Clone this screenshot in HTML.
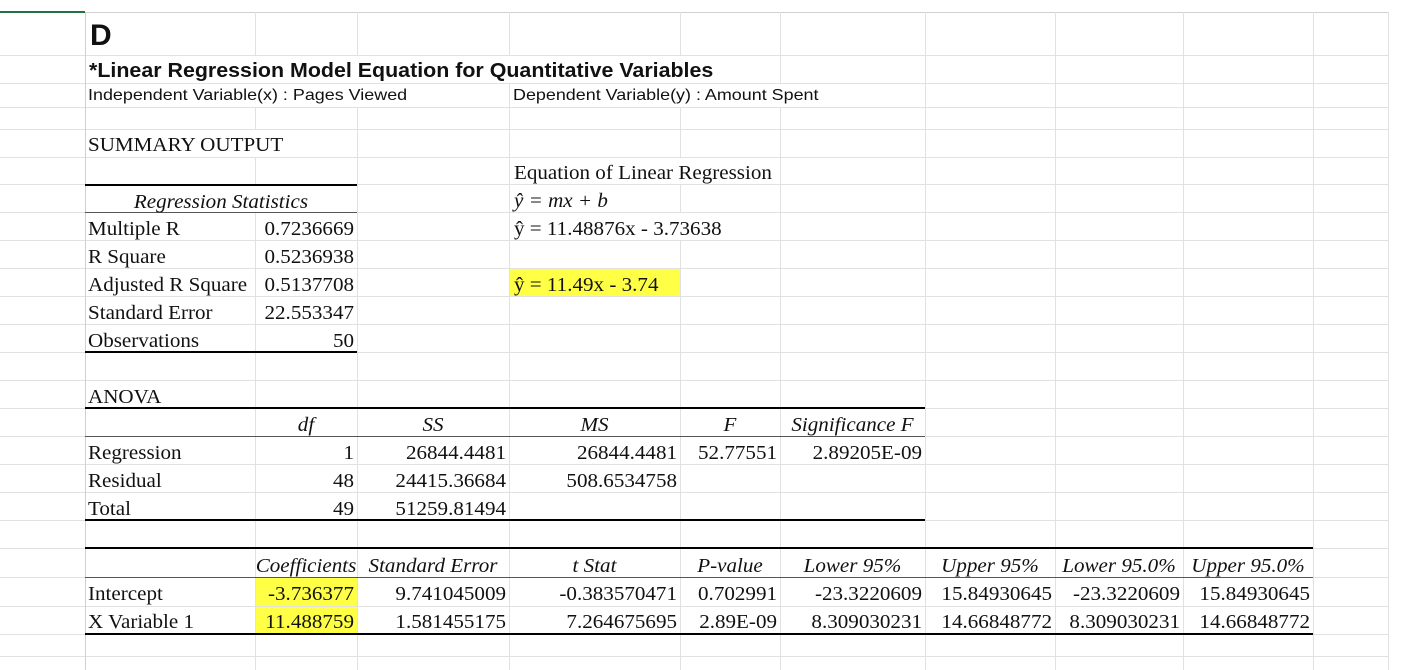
<!DOCTYPE html>
<html><head><meta charset="utf-8"><style>
body{margin:0;width:1403px;height:670px;background:#fff;position:relative;overflow:hidden}
.h{position:absolute;height:1px;background:#e1e1e1}
.v{position:absolute;width:1px;background:#e1e1e1}
.w{position:absolute;background:#fff}
.b{position:absolute;background:#000}
.t{position:absolute;font-family:"Liberation Serif",serif;font-size:19.5px;color:#111;white-space:nowrap;line-height:28px;height:28px;transform:scaleX(1.08);transform-origin:left center;margin-top:2px}
.a{font-family:"Liberation Sans",sans-serif;margin-top:0}
.r{text-align:right;transform-origin:right center}.c{text-align:center;transform-origin:center center}.i{font-style:italic}
.y{position:absolute;background:#ffff45}
</style></head><body>
<div class="h" style="left:0;top:12px;width:1388px;background:#d0d0d0"></div>
<div style="position:absolute;left:0;top:11px;width:85px;height:2px;background:#217346"></div>
<div class="h" style="left:0;top:55px;width:1388px"></div>
<div class="h" style="left:0;top:83px;width:1388px"></div>
<div class="h" style="left:0;top:107px;width:1388px"></div>
<div class="h" style="left:0;top:129px;width:1388px"></div>
<div class="h" style="left:0;top:157px;width:1388px"></div>
<div class="h" style="left:0;top:184px;width:1388px"></div>
<div class="h" style="left:0;top:212px;width:1388px"></div>
<div class="h" style="left:0;top:240px;width:1388px"></div>
<div class="h" style="left:0;top:268px;width:1388px"></div>
<div class="h" style="left:0;top:296px;width:1388px"></div>
<div class="h" style="left:0;top:324px;width:1388px"></div>
<div class="h" style="left:0;top:352px;width:1388px"></div>
<div class="h" style="left:0;top:380px;width:1388px"></div>
<div class="h" style="left:0;top:408px;width:1388px"></div>
<div class="h" style="left:0;top:436px;width:1388px"></div>
<div class="h" style="left:0;top:464px;width:1388px"></div>
<div class="h" style="left:0;top:492px;width:1388px"></div>
<div class="h" style="left:0;top:520px;width:1388px"></div>
<div class="h" style="left:0;top:548px;width:1388px"></div>
<div class="h" style="left:0;top:577px;width:1388px"></div>
<div class="h" style="left:0;top:606px;width:1388px"></div>
<div class="h" style="left:0;top:634px;width:1388px"></div>
<div class="h" style="left:0;top:656px;width:1388px"></div>
<div class="v" style="left:85px;top:12px;height:658px;background:#d0d0d0"></div>
<div class="v" style="left:255px;top:12px;height:658px"></div>
<div class="v" style="left:357px;top:12px;height:658px"></div>
<div class="v" style="left:509px;top:12px;height:658px"></div>
<div class="v" style="left:680px;top:12px;height:658px"></div>
<div class="v" style="left:780px;top:12px;height:658px"></div>
<div class="v" style="left:925px;top:12px;height:658px"></div>
<div class="v" style="left:1055px;top:12px;height:658px"></div>
<div class="v" style="left:1183px;top:12px;height:658px"></div>
<div class="v" style="left:1313px;top:12px;height:658px"></div>
<div class="v" style="left:1388px;top:12px;height:658px"></div>

<div class="w" style="left:86px;top:56px;width:640px;height:27px"></div>
<div class="w" style="left:86px;top:84px;width:330px;height:23px"></div>
<div class="w" style="left:510px;top:84px;width:320px;height:23px"></div>
<div class="w" style="left:86px;top:130px;width:200px;height:27px"></div>
<div class="w" style="left:510px;top:158px;width:270px;height:26px"></div>
<div class="w" style="left:86px;top:186px;width:270px;height:26px"></div>
<div class="w" style="left:510px;top:213px;width:220px;height:27px"></div>

<div class="y" style="left:510px;top:269px;width:170px;height:27px"></div>
<div class="y" style="left:256px;top:578px;width:101px;height:28px"></div>
<div class="y" style="left:256px;top:607px;width:101px;height:27px"></div>

<div class="b" style="left:85px;top:184px;width:272px;height:2px"></div>
<div class="b" style="left:85px;top:212px;width:272px;height:1px;background:#555"></div>
<div class="b" style="left:85px;top:351px;width:272px;height:2px"></div>
<div class="b" style="left:85px;top:407px;width:840px;height:2px"></div>
<div class="b" style="left:85px;top:436px;width:840px;height:1px;background:#555"></div>
<div class="b" style="left:85px;top:519px;width:840px;height:2px"></div>
<div class="b" style="left:85px;top:547px;width:1228px;height:2px"></div>
<div class="b" style="left:85px;top:577px;width:1228px;height:1px;background:#555"></div>
<div class="b" style="left:85px;top:633px;width:1228px;height:2px"></div>

<div class="t a" style="left:90px;top:18px;font-size:30px;font-weight:bold;line-height:36px;height:36px;transform:none">D</div>
<div class="t a" style="left:89px;top:57px;font-size:20px;font-weight:bold;transform:scaleX(1.07)">*Linear Regression Model Equation for Quantitative Variables</div>
<div class="t a" style="left:88px;top:83px;font-size:16px;line-height:26px;transform:scaleX(1.12)">Independent Variable(x) : Pages Viewed</div>
<div class="t a" style="left:513px;top:83px;font-size:16px;line-height:26px;transform:scaleX(1.12)">Dependent Variable(y) : Amount Spent</div>
<div class="t" style="left:88px;top:130px">SUMMARY OUTPUT</div>
<div class="t" style="left:514px;top:158px">Equation of Linear Regression</div>
<div class="t i c" style="left:85px;top:187px;width:272px">Regression Statistics</div>
<div class="t i" style="left:514px;top:186px">ŷ = mx + b</div>
<div class="t" style="left:514px;top:214px">ŷ = 11.48876x - 3.73638</div>
<div class="t" style="left:514px;top:270px">ŷ = 11.49x - 3.74</div>

<div class="t" style="left:88px;top:214px">Multiple R</div><div class="t r" style="left:255px;top:214px;width:99px">0.7236669</div>
<div class="t" style="left:88px;top:242px">R Square</div><div class="t r" style="left:255px;top:242px;width:99px">0.5236938</div>
<div class="t" style="left:88px;top:270px">Adjusted R Square</div><div class="t r" style="left:255px;top:270px;width:99px">0.5137708</div>
<div class="t" style="left:88px;top:298px">Standard Error</div><div class="t r" style="left:255px;top:298px;width:99px">22.553347</div>
<div class="t" style="left:88px;top:326px">Observations</div><div class="t r" style="left:255px;top:326px;width:99px">50</div>

<div class="t" style="left:88px;top:382px">ANOVA</div>
<div class="t i c" style="left:255px;top:410px;width:102px">df</div>
<div class="t i c" style="left:357px;top:410px;width:152px">SS</div>
<div class="t i c" style="left:509px;top:410px;width:171px">MS</div>
<div class="t i c" style="left:680px;top:410px;width:100px">F</div>
<div class="t i c" style="left:780px;top:410px;width:145px">Significance F</div>
<div class="t" style="left:88px;top:438px">Regression</div>
<div class="t r" style="left:255px;top:438px;width:99px">1</div>
<div class="t r" style="left:357px;top:438px;width:149px">26844.4481</div>
<div class="t r" style="left:509px;top:438px;width:168px">26844.4481</div>
<div class="t r" style="left:680px;top:438px;width:97px">52.77551</div>
<div class="t r" style="left:780px;top:438px;width:142px">2.89205E-09</div>
<div class="t" style="left:88px;top:466px">Residual</div>
<div class="t r" style="left:255px;top:466px;width:99px">48</div>
<div class="t r" style="left:357px;top:466px;width:149px">24415.36684</div>
<div class="t r" style="left:509px;top:466px;width:168px">508.6534758</div>
<div class="t" style="left:88px;top:494px">Total</div>
<div class="t r" style="left:255px;top:494px;width:99px">49</div>
<div class="t r" style="left:357px;top:494px;width:149px">51259.81494</div>

<div class="t i c" style="left:250px;top:551px;width:112px">Coefficients</div>
<div class="t i c" style="left:357px;top:551px;width:152px">Standard Error</div>
<div class="t i c" style="left:509px;top:551px;width:171px">t Stat</div>
<div class="t i c" style="left:680px;top:551px;width:100px">P-value</div>
<div class="t i c" style="left:780px;top:551px;width:145px">Lower 95%</div>
<div class="t i c" style="left:925px;top:551px;width:130px">Upper 95%</div>
<div class="t i c" style="left:1055px;top:551px;width:128px">Lower 95.0%</div>
<div class="t i c" style="left:1183px;top:551px;width:130px">Upper 95.0%</div>

<div class="t" style="left:88px;top:579px">Intercept</div>
<div class="t r" style="left:255px;top:579px;width:99px">-3.736377</div>
<div class="t r" style="left:357px;top:579px;width:149px">9.741045009</div>
<div class="t r" style="left:509px;top:579px;width:168px">-0.383570471</div>
<div class="t r" style="left:680px;top:579px;width:97px">0.702991</div>
<div class="t r" style="left:780px;top:579px;width:142px">-23.3220609</div>
<div class="t r" style="left:925px;top:579px;width:127px">15.84930645</div>
<div class="t r" style="left:1055px;top:579px;width:125px">-23.3220609</div>
<div class="t r" style="left:1183px;top:579px;width:127px">15.84930645</div>

<div class="t" style="left:88px;top:607px">X Variable 1</div>
<div class="t r" style="left:255px;top:607px;width:99px">11.488759</div>
<div class="t r" style="left:357px;top:607px;width:149px">1.581455175</div>
<div class="t r" style="left:509px;top:607px;width:168px">7.264675695</div>
<div class="t r" style="left:680px;top:607px;width:97px">2.89E-09</div>
<div class="t r" style="left:780px;top:607px;width:142px">8.309030231</div>
<div class="t r" style="left:925px;top:607px;width:127px">14.66848772</div>
<div class="t r" style="left:1055px;top:607px;width:125px">8.309030231</div>
<div class="t r" style="left:1183px;top:607px;width:127px">14.66848772</div>
</body></html>
